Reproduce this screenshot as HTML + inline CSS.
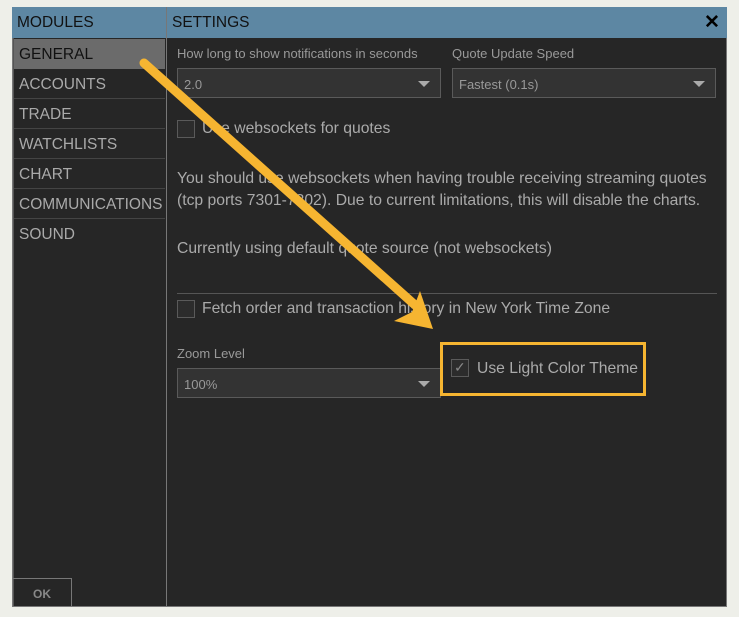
<!DOCTYPE html><html><head><style>
body{margin:0;width:739px;height:617px;background:#eeefe9;position:relative;overflow:hidden;font-family:"Liberation Sans",sans-serif}
.a{position:absolute}
.t{color:#aaa;font-size:15.7px;white-space:nowrap}
.s{color:#999;font-size:13px;white-space:nowrap}
.dd{position:absolute;height:30px;border:1px solid #5a5a5a;background:#333;box-sizing:border-box}
.dd span{position:absolute;left:6px;top:8px;color:#999;font-size:13px}
.dd i{position:absolute;right:10px;top:12px;border-left:6px solid transparent;border-right:6px solid transparent;border-top:6px solid #aaa}
.cb{position:absolute;width:18px;height:18px;border:1px solid #5a5a5a;box-sizing:border-box;background:#2c2c2c}
.mi{position:absolute;left:14px;width:151px;height:30px;border-bottom:1px solid #444;box-sizing:border-box;color:#aaa;font-size:15.5px;padding:7px 0 0 5px;white-space:nowrap}
</style></head><body>
<div class="a" style="left:12px;top:7px;width:715px;height:600px;background:#262626;border:1px solid #777;box-sizing:border-box"></div>
<div class="a" style="left:12px;top:7px;width:715px;height:31px;background:#5d87a3"></div>
<div class="a" style="left:166px;top:7px;width:1px;height:600px;background:#777"></div>
<div class="a" style="left:17px;top:14px;font-size:15.5px;color:#111">MODULES</div>
<div class="a" style="left:172px;top:14px;font-size:15.5px;color:#111">SETTINGS</div>
<div class="a" style="left:704px;top:11px;font-size:19px;font-weight:bold;color:#000">✕</div>
<div class="a" style="left:13px;top:38px;width:1px;height:569px;background:#555"></div>
<div class="mi" style="top:39px;background:#6b6b6b;color:#111;border:0">GENERAL</div>
<div class="mi" style="top:69px">ACCOUNTS</div>
<div class="mi" style="top:99px">TRADE</div>
<div class="mi" style="top:129px">WATCHLISTS</div>
<div class="mi" style="top:159px">CHART</div>
<div class="mi" style="top:189px">COMMUNICATIONS</div>
<div class="mi" style="top:219px;border:0">SOUND</div>
<div class="a" style="left:12px;top:578px;width:60px;height:29px;border:1px solid #777;box-sizing:border-box;color:#888;font-size:12px;font-weight:bold;text-align:center;padding-top:8px">OK</div>
<div class="a s" style="left:177px;top:46px">How long to show notifications in seconds</div>
<div class="a s" style="left:452px;top:46px">Quote Update Speed</div>
<div class="dd" style="left:177px;top:68px;width:264px"><span>2.0</span><i></i></div>
<div class="dd" style="left:452px;top:68px;width:264px"><span>Fastest (0.1s)</span><i></i></div>
<div class="cb" style="left:177px;top:120px"></div>
<div class="a t" style="left:202px;top:120px">Use websockets for quotes</div>
<div class="a t" style="left:177px;top:168px;line-height:22px">You should use websockets when having trouble receiving streaming quotes<br>(tcp ports 7301-7302). Due to current limitations, this will disable the charts.</div>
<div class="a t" style="left:177px;top:240px">Currently using default quote source (not websockets)</div>
<div class="a" style="left:177px;top:293px;width:540px;height:1px;background:#555"></div>
<div class="cb" style="left:177px;top:300px"></div>
<div class="a t" style="left:202px;top:300px">Fetch order and transaction history in New York Time Zone</div>
<div class="a s" style="left:177px;top:346px">Zoom Level</div>
<div class="dd" style="left:177px;top:368px;width:264px"><span>100%</span><i></i></div>
<div class="a" style="left:440px;top:342px;width:206px;height:54px;border:3px solid #f6b531;box-sizing:border-box;background:#262626"></div>
<div class="cb" style="left:451px;top:359px"><span style="position:absolute;left:2px;top:-1px;color:#888;font-size:14px">✓</span></div>
<div class="a t" style="left:477px;top:360px">Use Light Color Theme</div>
<svg class="a" style="left:0;top:0" width="739" height="617"><line x1="144" y1="63" x2="415" y2="305" stroke="#f6b531" stroke-width="9" stroke-linecap="round"/><polygon points="420,291 433,329 394,321 412,312" fill="#f6b531"/></svg>
</body></html>
